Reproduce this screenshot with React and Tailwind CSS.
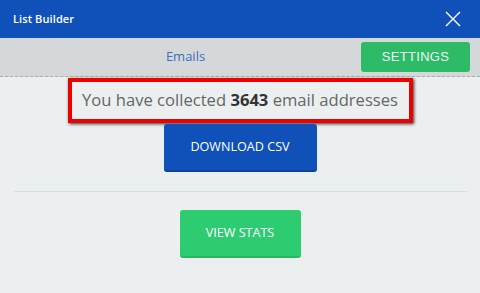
export default function App() {
  return (
    <div className="w-[480px] h-[293px] bg-[#ebeff0] overflow-hidden" style={{ fontFamily: '"Open Sans", "Liberation Sans", sans-serif' }}>
      <div className="h-[38px] bg-[#0f51b8] flex items-center justify-between pl-[13px] pr-[19px]">
        <span className="text-white text-[11px] font-semibold tracking-[0.1px]">List Builder</span>
        <svg width="16" height="16" viewBox="0 0 16 16" className="text-white">
          <path d="M1 1 L15 15 M15 1 L1 15" stroke="currentColor" strokeWidth="1.4" fill="none" />
        </svg>
      </div>
      <div className="h-[39px] bg-[#d5d8d9] border-b border-dashed border-[#a9adae] flex items-center pr-[10px]">
        <div className="flex-1 text-center pl-[10px] text-[13px] text-[#3d6fc2]">Emails</div>
        <button className="w-[109px] h-[30px] rounded-[3px] bg-[#2dbb68] text-[#e9f7ee] text-[13px] tracking-[0.3px]" style={{ fontFamily: '"Liberation Sans", Arial, sans-serif' }}>SETTINGS</button>
      </div>
      <div className="flex flex-col items-center">
        <div className="mt-[1px] w-[345px] h-[45px] border-4 border-[#ee0000] shadow-[1px_1px_3px_rgba(0,0,0,0.8)] flex items-center justify-center text-[16.6px] text-[#666666]">
          <span>You have collected <b className="font-bold text-[#333333]">3643</b> email addresses</span>
        </div>
        <button className="mt-[1px] w-[153px] h-[48px] rounded-[3px] bg-[#0f51b8] border-b-2 border-[#0c439a] text-white text-[12.6px]">DOWNLOAD CSV</button>
        <div className="mt-[19px] w-[453px] h-px bg-[#d8dddf]"></div>
        <button className="mt-[18px] w-[121px] h-[48px] rounded-[3px] bg-[#2ecc71] border-b-2 border-[#29b764] text-white text-[12.6px]">VIEW STATS</button>
      </div>
    </div>
  );
}
